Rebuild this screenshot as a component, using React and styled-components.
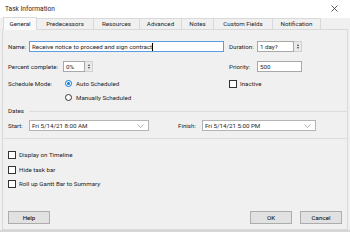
import React, { useState } from 'react';
import styled, { createGlobalStyle } from 'styled-components';

const GlobalStyle = createGlobalStyle`
  html, body {
    margin: 0;
    padding: 0;
    background: #d6d6d6;
  }
  body {
    font-family: Roboto, "Liberation Sans", Arial, sans-serif;
    font-size: 6.2px;
    color: #1e1e1e;
  }
`;

const Window = styled.div`
  width: 350px;
  height: 230px;
  display: flex;
  flex-direction: column;
  background: #f0f0f0;
`;

const TitleBar = styled.div`
  height: 17px;
  flex: none;
  background: #fff;
  display: flex;
  align-items: center;
  justify-content: space-between;
  padding: 0 12px 1px 5px;
  font-size: 6.6px;
`;

const Body = styled.div`
  flex: 1;
  display: flex;
  flex-direction: column;
  padding: 0 2px;
`;

const TabStrip = styled.div`
  height: 12px;
  display: flex;
  align-items: flex-end;
  padding-left: 1px;
  margin-bottom: -1px;
`;

const Tab = styled.div`
  width: ${(p) => p.$w}px;
  height: ${(p) => (p.$active ? 13 : 12)}px;
  margin-left: -1px;
  box-sizing: border-box;
  border: 1px solid #d9d9d9;
  border-bottom: ${(p) => (p.$active ? 'none' : '1px solid #d9d9d9')};
  background: ${(p) => (p.$active ? '#fafafa' : '#f0f0f0')};
  display: flex;
  align-items: center;
  justify-content: center;
  position: relative;
  z-index: ${(p) => (p.$active ? 1 : 0)};
  &:first-child {
    margin-left: 0;
  }
`;

const Panel = styled.div`
  flex: 1;
  border: 1px solid #d9d9d9;
  padding: 11px 5px 5px 5px;
  display: flex;
  flex-direction: column;
`;

const Row = styled.div`
  display: flex;
  align-items: center;
  height: ${(p) => p.$h || 11}px;
  margin-top: ${(p) => p.$mt || 0}px;
`;

const Cell = styled.div`
  display: flex;
  align-items: center;
  width: ${(p) => (p.$w ? `${p.$w}px` : 'auto')};
  flex: ${(p) => (p.$w ? 'none' : 1)};
  height: 100%;
`;

const Label = styled.span`
  width: ${(p) => p.$w}px;
  flex: none;
  white-space: nowrap;
`;

const TextBox = styled.div`
  width: ${(p) => p.$w}px;
  height: 11px;
  box-sizing: border-box;
  background: #fff;
  border: 1px solid ${(p) => (p.$focus ? '#5c9ce0' : '#a8a8a8')};
  display: flex;
  align-items: center;
  padding-left: 2px;
  white-space: nowrap;
  overflow: hidden;
`;

const Caret = styled.span`
  display: inline-block;
  width: 1px;
  height: 8px;
  background: #000;
`;

const Spinner = styled.div`
  width: 8px;
  height: 11px;
  box-sizing: border-box;
  border: 1px solid #d0d0d0;
  border-left: none;
  background: #e9e9e9;
  display: flex;
  flex-direction: column;
  align-items: center;
  justify-content: space-around;
  padding: 1px 0;
`;

const Arrow = styled.span`
  width: 0;
  height: 0;
  border-left: 1.5px solid transparent;
  border-right: 1.5px solid transparent;
  ${(p) => (p.$up ? 'border-bottom: 2px solid #444;' : 'border-top: 2px solid #444;')}
`;

const Combo = styled.div`
  width: ${(p) => p.$w}px;
  height: 11px;
  box-sizing: border-box;
  background: #fff;
  border: 1px solid #b4b4b4;
  display: flex;
  align-items: center;
  justify-content: space-between;
  padding: 0 4px 0 2px;
  white-space: nowrap;
`;

const RadioItem = styled.label`
  display: flex;
  align-items: center;
  gap: 4px;
`;

const RadioCircle = styled.span`
  width: 7px;
  height: 7px;
  box-sizing: border-box;
  border-radius: 50%;
  border: 1px solid ${(p) => (p.$on ? '#0078d7' : '#333')};
  background: #fff;
  display: flex;
  align-items: center;
  justify-content: center;
  &::after {
    content: '';
    width: 3px;
    height: 3px;
    border-radius: 50%;
    background: ${(p) => (p.$on ? '#0078d7' : 'transparent')};
  }
`;

const CheckItem = styled.label`
  display: flex;
  align-items: center;
  gap: 3px;
  height: ${(p) => p.$h || 8}px;
  margin-top: ${(p) => p.$mt || 0}px;
`;

const CheckBox = styled.span`
  width: 8px;
  height: 8px;
  box-sizing: border-box;
  border: 1px solid #333;
  background: #fff;
  flex: none;
`;

const GroupHeader = styled.div`
  display: flex;
  align-items: center;
  gap: 5px;
  height: 8px;
  margin-top: ${(p) => p.$mt || 0}px;
  margin-right: -5px;
  &::after {
    content: '';
    flex: 1;
    height: 1px;
    background: #dcdcdc;
  }
`;

const Divider = styled.div`
  height: 1px;
  background: #dcdcdc;
  margin: ${(p) => p.$mt || 0}px -5px 0 -5px;
`;

const Footer = styled.div`
  margin-top: auto;
  display: flex;
  align-items: center;
  gap: 8px;
`;

const Button = styled.button`
  width: 42px;
  height: 13px;
  box-sizing: border-box;
  border: 1px solid #adadad;
  background: #e1e1e1;
  font: inherit;
  color: #000;
  padding: 0;
  margin-left: ${(p) => (p.$push ? 'auto' : '0')};
`;

const ChevronDown = () => (
  <svg width="7" height="4" viewBox="0 0 7 4">
    <polyline points="0.5,0.5 3.5,3.5 6.5,0.5" fill="none" stroke="#999" strokeWidth="0.8" />
  </svg>
);

const CloseIcon = () => (
  <svg width="7" height="7" viewBox="0 0 7 7">
    <path d="M0.5 0.5 L6.5 6.5 M6.5 0.5 L0.5 6.5" stroke="#333" strokeWidth="0.8" />
  </svg>
);

const tabs = [
  ['General', 34],
  ['Predecessors', 58],
  ['Resources', 47],
  ['Advanced', 43],
  ['Notes', 33],
  ['Custom Fields', 60],
  ['Notification', 49],
];

const SpinBox = ({ w, value }) => (
  <>
    <TextBox $w={w}>{value}</TextBox>
    <Spinner>
      <Arrow $up />
      <Arrow />
    </Spinner>
  </>
);

const App = () => {
  const [tab, setTab] = useState('General');

  return (
    <>
      <GlobalStyle />
      <Window>
        <TitleBar>
          <span>Task Information</span>
          <CloseIcon />
        </TitleBar>
        <Body>
          <TabStrip>
            {tabs.map(([name, w]) => (
              <Tab key={name} $w={w} $active={tab === name} onClick={() => setTab(name)}>
                {name}
              </Tab>
            ))}
          </TabStrip>
          <Panel>
            <Row>
              <Cell $w={221}>
                <Label $w={21}>Name:</Label>
                <TextBox $w={195} $focus>
                  Receive notice to proceed and sign contract<Caret />
                </TextBox>
              </Cell>
              <Cell>
                <Label $w={28}>Duration:</Label>
                <SpinBox w={37} value="1 day?" />
              </Cell>
            </Row>

            <Row $mt={9}>
              <Cell $w={221}>
                <Label $w={55}>Percent complete:</Label>
                <SpinBox w={22} value="0%" />
              </Cell>
              <Cell>
                <Label $w={28}>Priority:</Label>
                <TextBox $w={45}>500</TextBox>
              </Cell>
            </Row>

            <Row $mt={7} $h={9}>
              <Cell $w={221}>
                <Label $w={57}>Schedule Mode:</Label>
                <RadioItem>
                  <RadioCircle $on />
                  Auto Scheduled
                </RadioItem>
              </Cell>
              <Cell>
                <CheckItem>
                  <CheckBox />
                  Inactive
                </CheckItem>
              </Cell>
            </Row>

            <Row $mt={5} $h={9}>
              <Cell $w={221}>
                <Label $w={57} />
                <RadioItem>
                  <RadioCircle />
                  Manually Scheduled
                </RadioItem>
              </Cell>
            </Row>

            <GroupHeader $mt={5}>Dates</GroupHeader>

            <Row $mt={5}>
              <Cell $w={170}>
                <Label $w={21}>Start:</Label>
                <Combo $w={120}>
                  Fri 5/14/21 8:00 AM
                  <ChevronDown />
                </Combo>
              </Cell>
              <Cell>
                <Label $w={24}>Finish:</Label>
                <Combo $w={114}>
                  Fri 5/14/21 5:00 PM
                  <ChevronDown />
                </Combo>
              </Cell>
            </Row>

            <Divider $mt={7} />

            <CheckItem $mt={12}>
              <CheckBox />
              Display on Timeline
            </CheckItem>
            <CheckItem $mt={7}>
              <CheckBox />
              Hide task bar
            </CheckItem>
            <CheckItem $mt={6}>
              <CheckBox />
              Roll up Gantt Bar to Summary
            </CheckItem>

            <Footer>
              <Button>Help</Button>
              <Button $push>OK</Button>
              <Button>Cancel</Button>
            </Footer>
          </Panel>
        </Body>
      </Window>
    </>
  );
};

export default App;
